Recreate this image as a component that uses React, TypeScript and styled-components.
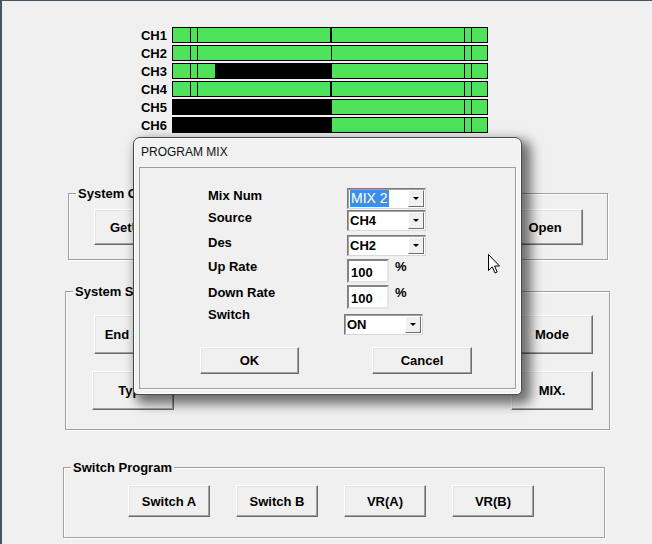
import React from "react";
import styled, { createGlobalStyle } from "styled-components";

const GlobalStyle = createGlobalStyle`
  html, body {
    margin: 0;
    padding: 0;
    background: #f0f0f0;
    overflow: hidden;
  }
  body {
    font-family: "Liberation Sans", Arial, sans-serif;
  }
`;

const Window = styled.div`
  position: relative;
  width: 100%;
  height: 544px;
  box-sizing: border-box;
  border-top: 1px solid #4a545d;
  border-left: 2px solid #4a545d;
  background: #f0f0f0;
  overflow: hidden;
  font-family: "Liberation Sans", Arial, sans-serif;
  font-weight: bold;
  font-size: 13px;
  color: #000;
`;

/* channel monitor */
const Channels = styled.div`
  display: grid;
  grid-template-columns: 165px 316px;
  grid-auto-rows: 16px;
  column-gap: 5px;
  row-gap: 2px;
  padding-top: 26px;
`;

const ChLabel = styled.div`
  text-align: right;
  line-height: 16px;
  position: relative;
  top: 1px;
`;

const Bar = styled.div`
  position: relative;
  height: 16px;
  box-sizing: border-box;
  border: 1px solid #000;
  background: #4ee35b;
`;

const Tick = styled.div<{ $x: number }>`
  position: absolute;
  top: 0;
  bottom: 0;
  width: 1px;
  left: ${(p) => p.$x}px;
  background: #000;
`;

const Fill = styled.div`
  position: absolute;
  top: 0;
  bottom: 0;
  background: #000;
`;

/* group boxes */
const Group = styled.div<{ $top: number; $left: number; $width: number; $height: number }>`
  position: relative;
  box-sizing: border-box;
  margin: ${(p) => p.$top}px 0 0 ${(p) => p.$left}px;
  width: ${(p) => p.$width}px;
  height: ${(p) => p.$height}px;
  border: 1px solid #a0a0a0;
  box-shadow: 1px 1px 0 #fff, inset 1px 1px 0 #fff;
`;

const Legend = styled.span`
  position: absolute;
  top: -8px;
  left: 7px;
  padding: 0 2px;
  background: #f0f0f0;
  line-height: 15px;
  white-space: nowrap;
`;

const ButtonRow = styled.div<{ $pad: string; $gap?: number; $spread?: boolean }>`
  display: flex;
  justify-content: ${(p) => (p.$spread ? "space-between" : "flex-start")};
  gap: ${(p) => p.$gap ?? 0}px;
  padding: ${(p) => p.$pad};
`;

const Button = styled.div<{ $w: number; $h: number }>`
  display: flex;
  align-items: center;
  justify-content: center;
  box-sizing: border-box;
  width: ${(p) => p.$w}px;
  height: ${(p) => p.$h}px;
  flex: none;
  background: #f0f0f0;
  border: 1px solid;
  border-color: #fff #6d6d6d #6d6d6d #fff;
  box-shadow: inset -1px -1px 0 #a0a0a0, inset 1px 1px 0 #e3e3e3;
  white-space: nowrap;
  overflow: hidden;
`;

/* modal dialog */
const Dialog = styled.div`
  position: absolute;
  left: 131px;
  top: 136px;
  width: 389px;
  height: 258px;
  box-sizing: border-box;
  display: flex;
  flex-direction: column;
  background: #f2f2f2;
  border: 1px solid #4a4a4a;
  border-radius: 7px 7px 5px 5px;
  box-shadow: inset 0 0 0 1px #fff, 6px 6px 12px 3px rgba(0, 0, 0, 0.55);
`;

const TitleBar = styled.div`
  height: 28px;
  display: flex;
  align-items: center;
  padding: 0 0 1px 7px;
  font-weight: normal;
  font-size: 12px;
  color: #111;
`;

const Client = styled.div`
  flex: 1;
  margin: 0 5px 5px 5px;
  border: 1px solid #9c9c9c;
  box-shadow: 1px 1px 0 #fff;
  background: #f0f0f0;
  padding: 20px 0 0 68px;
`;

const FieldRow = styled.div<{ $h: number }>`
  display: grid;
  grid-template-columns: 139px auto;
  align-items: start;
  height: ${(p) => p.$h}px;
`;

const FieldLabel = styled.div`
  line-height: 15px;
  white-space: nowrap;
`;

const Controls = styled.div`
  display: flex;
  align-items: flex-start;
  gap: 6px;
`;

const Combo = styled.div<{ $shift?: number; $drop?: number }>`
  display: flex;
  box-sizing: border-box;
  width: 79px;
  height: 21px;
  margin-left: ${(p) => -(p.$shift ?? 0)}px;
  margin-top: ${(p) => p.$drop ?? 0}px;
  border: 1px solid;
  border-color: #7a7a7a #d8d8d8 #d8d8d8 #7a7a7a;
  box-shadow: inset 1px 1px 0 #a0a0a0;
  background: #fff;
`;

const ComboText = styled.div`
  flex: 1;
  display: flex;
  align-items: center;
  padding-left: 2px;
  line-height: 15px;
`;

const Selected = styled.span`
  background: #3d8fe6;
  color: #fff;
  padding: 1px 1px;
  font-weight: normal;
  font-size: 14px;
`;

const DropButton = styled.div`
  width: 16px;
  margin: 1px 1px 1px 0;
  box-sizing: border-box;
  display: flex;
  align-items: center;
  justify-content: center;
  background: #f0f0f0;
  border: 1px solid;
  border-color: #fff #6d6d6d #6d6d6d #fff;
  &::after {
    content: "";
    border-left: 3px solid transparent;
    border-right: 3px solid transparent;
    border-top: 3px solid #000;
  }
`;

const TextBox = styled.div`
  box-sizing: border-box;
  width: 42px;
  height: 24px;
  padding: 4px 0 0 2px;
  background: #fff;
  border: 2px solid;
  border-color: #848484 #e6e6e6 #e6e6e6 #848484;
  line-height: 15px;
`;

const Unit = styled.div`
  line-height: 15px;
`;

const DialogButtons = styled.div`
  display: flex;
  gap: 73px;
  margin: 12px 0 0 -8px;
`;

const Cursor = styled.svg`
  position: absolute;
  left: 486px;
  top: 253px;
`;

type Channel = { name: string; fill: [number, number] };

const channels: Channel[] = [
  { name: "CH1", fill: [157, 159] },
  { name: "CH2", fill: [158, 158] },
  { name: "CH3", fill: [42, 158] },
  { name: "CH4", fill: [157, 159] },
  { name: "CH5", fill: [0, 158] },
  { name: "CH6", fill: [0, 158] },
];

const ticks = [17, 24, 158, 291, 298];

const ComboBox = ({ value, selected, shift, drop }: { value: string; selected?: boolean; shift?: number; drop?: number }) => (
  <Combo $shift={shift} $drop={drop}>
    <ComboText>{selected ? <Selected>{value}</Selected> : value}</ComboText>
    <DropButton />
  </Combo>
);

export default function App() {
  return (
    <>
      <GlobalStyle />
      <Window>
        <Channels>
          {channels.map((c) => (
            <React.Fragment key={c.name}>
              <ChLabel>{c.name}</ChLabel>
              <Bar>
                {ticks.map((t) => (
                  <Tick key={t} $x={t} />
                ))}
                <Fill style={{ left: c.fill[0], width: c.fill[1] - c.fill[0] }} />
              </Bar>
            </React.Fragment>
          ))}
        </Channels>

        <Group $top={60} $left={66} $width={540} $height={67}>
          <Legend>System Control</Legend>
          <ButtonRow $pad="15px 24px 0 25px" $spread>
            <Button $w={76} $h={36}>GetUID</Button>
            <Button $w={76} $h={36}>Open</Button>
          </ButtonRow>
        </Group>

        <Group $top={31} $left={63} $width={545} $height={139}>
          <Legend>System Setting</Legend>
          <ButtonRow $pad="23px 16px 0 28px" $spread>
            <Button $w={82} $h={39}>End Point</Button>
            <Button $w={82} $h={39}>Mode</Button>
          </ButtonRow>
          <ButtonRow $pad="17px 16px 0 26px" $spread>
            <Button $w={82} $h={39}>Type</Button>
            <Button $w={82} $h={39}>MIX.</Button>
          </ButtonRow>
        </Group>

        <Group $top={37} $left={61} $width={542} $height={71}>
          <Legend>Switch Program</Legend>
          <ButtonRow $pad="17px 0 0 64px" $gap={26}>
            <Button $w={82} $h={32}>Switch A</Button>
            <Button $w={82} $h={32}>Switch B</Button>
            <Button $w={82} $h={32}>VR(A)</Button>
            <Button $w={82} $h={32}>VR(B)</Button>
          </ButtonRow>
        </Group>

        <Dialog>
          <TitleBar>PROGRAM MIX</TitleBar>
          <Client>
            <FieldRow $h={22}>
              <FieldLabel>Mix Num</FieldLabel>
              <ComboBox value="MIX 2" selected />
            </FieldRow>
            <FieldRow $h={25}>
              <FieldLabel>Source</FieldLabel>
              <ComboBox value="CH4" />
            </FieldRow>
            <FieldRow $h={24}>
              <FieldLabel>Des</FieldLabel>
              <ComboBox value="CH2" />
            </FieldRow>
            <FieldRow $h={26}>
              <FieldLabel>Up Rate</FieldLabel>
              <Controls>
                <TextBox>100</TextBox>
                <Unit>%</Unit>
              </Controls>
            </FieldRow>
            <FieldRow $h={22}>
              <FieldLabel>Down Rate</FieldLabel>
              <Controls>
                <TextBox>100</TextBox>
                <Unit>%</Unit>
              </Controls>
            </FieldRow>
            <FieldRow $h={28}>
              <FieldLabel>Switch</FieldLabel>
              <ComboBox value="ON" shift={3} drop={7} />
            </FieldRow>
            <DialogButtons>
              <Button $w={99} $h={27}>OK</Button>
              <Button $w={100} $h={27}>Cancel</Button>
            </DialogButtons>
          </Client>
        </Dialog>

        <Cursor width="13" height="21" viewBox="0 0 13 21">
          <path
            d="M0.5 0.5 L0.5 16.5 L4.3 12.8 L7 19 L9.2 18 L6.6 12 L11.5 12 Z"
            fill="#fff"
            stroke="#000"
            strokeWidth="1"
            strokeLinejoin="miter"
          />
        </Cursor>
      </Window>
    </>
  );
}
